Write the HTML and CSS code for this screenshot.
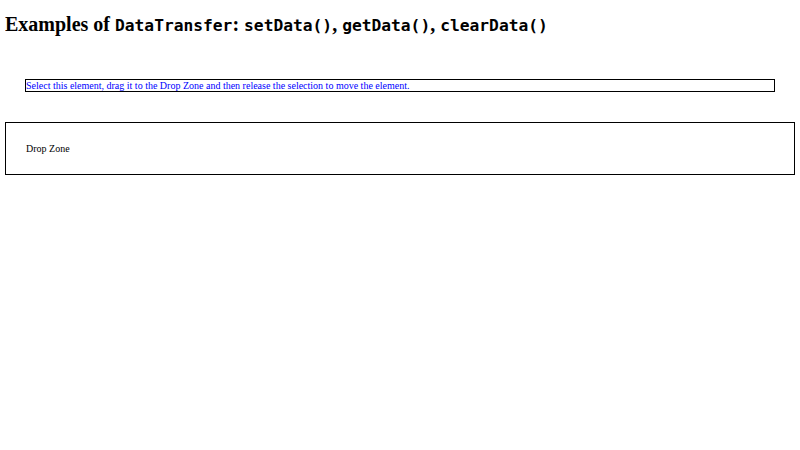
FILE: index.html
```html
<!DOCTYPE html>
<html>
<head>
<meta charset="utf-8">
<link rel="stylesheet" href="styles.css">
</head>
<body>
<h1 class="title">Examples of <code class="mono">DataTransfer</code>: <code class="mono">setData()</code>, <code class="mono">getData()</code>, <code class="mono">clearData()</code></h1>
<div class="wrap">
  <p class="source" draggable="true">Select this element, drag it to the Drop Zone and then release the selection to move the element.</p>
</div>
<div class="wrap target">Drop Zone</div>
</body>
</html>
```
FILE: styles.css
```css
html, body {
  background: #fff;
}
body {
  margin: 5px;
  font-family: "Liberation Serif", "Times New Roman", serif;
  font-size: 10px;
  color: #000;
}
.title {
  font-size: 20px;
  font-weight: bold;
  margin: 8px 0 13px;
}
.mono {
  font-family: "DejaVu Sans Mono", monospace;
  font-size: 16.25px;
}
.wrap {
  margin: 0;
  padding: 20px;
}
.source {
  margin: 10px 0;
  color: blue;
  border: 1px solid black;
}
.target {
  border: 1px solid black;
}
```
